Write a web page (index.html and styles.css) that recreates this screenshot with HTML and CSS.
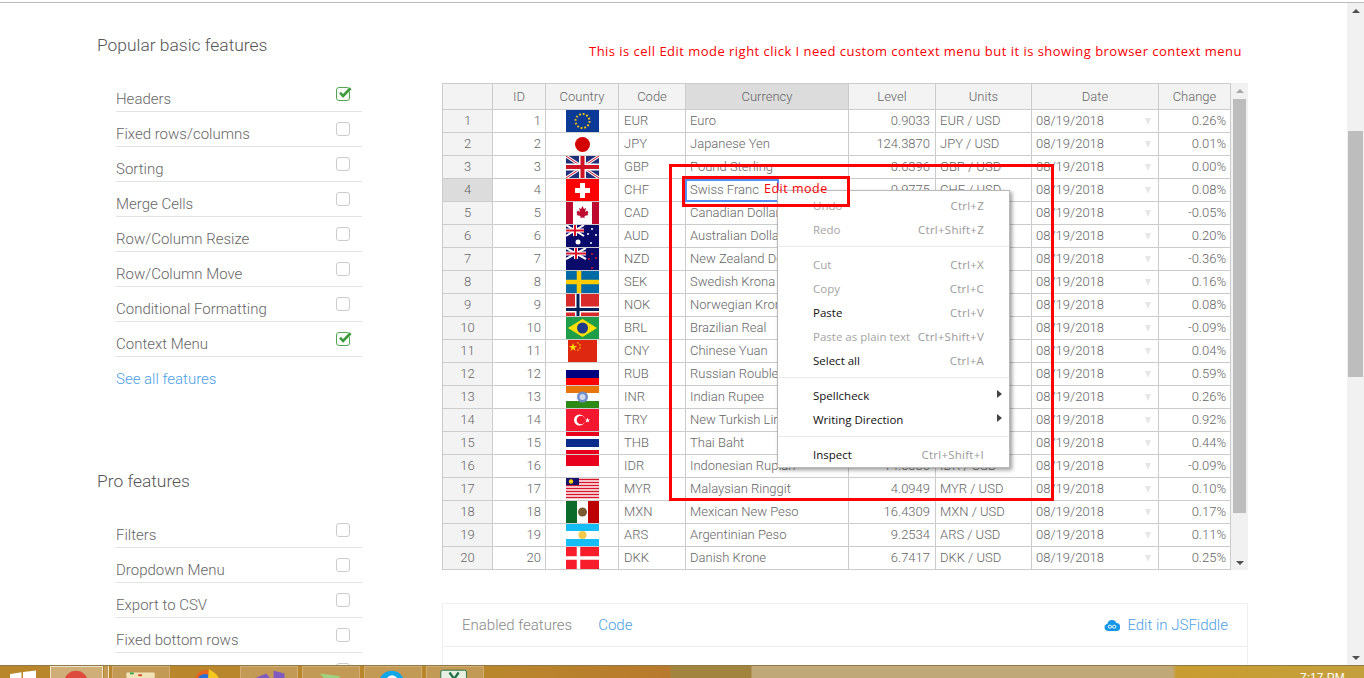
FILE: index.html
```html
<!DOCTYPE html>
<html lang="en">
<head>
<meta charset="utf-8">
<title>Handsontable features</title>
<link rel="stylesheet" href="styles.css">
</head>
<body>
<div class="screen">
  <div class="page">
    <div class="content">
      <aside class="sidebar">
        <h2 class="side-title">Popular basic features</h2>
        <ul class="features">
          <li>Headers<span class="box on"><svg viewBox="0 0 17 15"><path d="M6 11 2.8 7.6 5 5.6 7 7.7 13.5 1 15.8 3.2 7 12.2z"/></svg></span></li>
          <li>Fixed rows/columns<span class="box"></span></li>
          <li>Sorting<span class="box"></span></li>
          <li>Merge Cells<span class="box"></span></li>
          <li>Row/Column Resize<span class="box"></span></li>
          <li>Row/Column Move<span class="box"></span></li>
          <li>Conditional Formatting<span class="box"></span></li>
          <li>Context Menu<span class="box on"><svg viewBox="0 0 17 15"><path d="M6 11 2.8 7.6 5 5.6 7 7.7 13.5 1 15.8 3.2 7 12.2z"/></svg></span></li>
        </ul>
        <a class="see-all" href="#">See all features</a>
        <h2 class="side-title pro">Pro features</h2>
        <ul class="features">
          <li>Filters<span class="box"></span></li>
          <li>Dropdown Menu<span class="box"></span></li>
          <li>Export to CSV<span class="box"></span></li>
          <li>Fixed bottom rows<span class="box"></span></li>
          <li>Trimming rows<span class="box"></span></li>
        </ul>
      </aside>
      <main class="main">
        <p class="note">This is cell Edit mode right click I need custom context menu but it is showing browser context menu</p>
        <div class="grid-wrap">
          <table class="grid">
            <colgroup><col class="c1"><col class="c2"><col class="c3"><col class="c4"><col class="c5"><col class="c6"><col class="c7"><col class="c8"><col class="c9"></colgroup>
            <thead><tr><th></th><th>ID</th><th>Country</th><th>Code</th><th class="active">Currency</th><th>Level</th><th>Units</th><th>Date</th><th>Change</th></tr></thead>
            <tbody>
              <tr><th>1</th><td class="r">1</td><td><svg class="flag" viewBox="0 0 33 22"><rect width="33" height="22" fill="#0a3a96"/><circle cx="16.5" cy="11" r="7" fill="none" stroke="#f5c400" stroke-width="2" stroke-dasharray="1.8 1.87"/></svg></td><td>EUR</td><td>Euro</td><td class="r">0.9033</td><td>EUR / USD</td><td class="date">08/19/2018</td><td class="r">0.26%</td></tr>
              <tr><th>2</th><td class="r">2</td><td><svg class="flag" viewBox="0 0 33 22"><rect width="33" height="22" fill="#fff"/><circle cx="16.5" cy="11.5" r="7.5" fill="#d40000"/></svg></td><td>JPY</td><td>Japanese Yen</td><td class="r">124.3870</td><td>JPY / USD</td><td class="date">08/19/2018</td><td class="r">0.01%</td></tr>
              <tr><th>3</th><td class="r">3</td><td><svg class="flag" viewBox="0 0 33 22"><rect width="33" height="22" fill="#1f2f78"/><path d="M0 0 33 22M33 0 0 22" stroke="#fff" stroke-width="3"/><path d="M0 0 33 22M33 0 0 22" stroke="#cf1126" stroke-width="1"/><path d="M16.5 0V22M0 11H33" stroke="#fff" stroke-width="7"/><path d="M16.5 0V22M0 11H33" stroke="#cf1126" stroke-width="4"/></svg></td><td>GBP</td><td>Pound Sterling</td><td class="r">0.6396</td><td>GBP / USD</td><td class="date">08/19/2018</td><td class="r">0.00%</td></tr>
              <tr><th class="active">4</th><td class="r">4</td><td><svg class="flag" viewBox="0 0 33 22"><rect width="33" height="22" fill="#ff0000"/><path d="M14 4h5v5h5v5h-5v5h-5v-5H9V9h5z" fill="#fff"/></svg></td><td>CHF</td><td>Swiss Franc</td><td class="r">0.9775</td><td>CHF / USD</td><td class="date">08/19/2018</td><td class="r">0.08%</td></tr>
              <tr><th>5</th><td class="r">5</td><td><svg class="flag" viewBox="0 0 33 22"><rect width="33" height="22" fill="#fff"/><rect width="7" height="22" fill="#bf0a30"/><rect x="26" width="7" height="22" fill="#bf0a30"/><path d="M16.500 4l1.500 3 2-1-1 4 2-1.500 1.500 2-1 1.500 1 1-4 1 .2 2-2-.5h-.4l-2 .5.2-2-4-1 1-1-1-1.500 1.500-2 2 1.500-1-4 2 1z" fill="#bf0a30"/></svg></td><td>CAD</td><td>Canadian Dollar</td><td class="r">1.3010</td><td>CAD / USD</td><td class="date">08/19/2018</td><td class="r">-0.05%</td></tr>
              <tr><th>6</th><td class="r">6</td><td><svg class="flag" viewBox="0 0 33 22"><rect width="33" height="22" fill="#0a0a6b"/><path d="M0 0 18 11M18 0 0 11" stroke="#fff" stroke-width="2"/><path d="M9 0V11M0 5.500H18" stroke="#fff" stroke-width="4"/><path d="M9 0V11M0 5.500H18" stroke="#d8152b" stroke-width="2"/><circle cx="12" cy="17" r="2.500" fill="#fff"/><circle cx="26" cy="4" r="1" fill="#fff"/><circle cx="30" cy="10" r="1" fill="#fff"/><circle cx="25" cy="18" r="1" fill="#fff"/><circle cx="22" cy="9" r="1" fill="#fff"/></svg></td><td>AUD</td><td>Australian Dollar</td><td class="r">1.3702</td><td>AUD / USD</td><td class="date">08/19/2018</td><td class="r">0.20%</td></tr>
              <tr><th>7</th><td class="r">7</td><td><svg class="flag" viewBox="0 0 33 22"><rect width="33" height="22" fill="#0a0a6b"/><path d="M0 0 20 11M20 0 0 11" stroke="#fff" stroke-width="2"/><path d="M10 0V11M0 5.500H20" stroke="#fff" stroke-width="4"/><path d="M10 0V11M0 5.500H20" stroke="#d8152b" stroke-width="2"/><circle cx="26" cy="6" r="1" fill="#d8152b"/><circle cx="30" cy="10" r="1" fill="#d8152b"/><circle cx="26" cy="20" r="1" fill="#d8152b"/><circle cx="23" cy="11" r="1" fill="#d8152b"/></svg></td><td>NZD</td><td>New Zealand Dollar</td><td class="r">1.5117</td><td>NZD / USD</td><td class="date">08/19/2018</td><td class="r">-0.36%</td></tr>
              <tr><th>8</th><td class="r">8</td><td><svg class="flag" viewBox="0 0 33 22"><rect width="33" height="22" fill="#006aa7"/><path d="M0 11H33M13 0V22" stroke="#fecc00" stroke-width="4.500"/></svg></td><td>SEK</td><td>Swedish Krona</td><td class="r">9.1261</td><td>SEK / USD</td><td class="date">08/19/2018</td><td class="r">0.16%</td></tr>
              <tr><th>9</th><td class="r">9</td><td><svg class="flag" viewBox="0 0 33 22"><rect width="33" height="22" fill="#d92a2a"/><path d="M0 15.500H33M12 0V22" stroke="#fff" stroke-width="6"/><path d="M0 15.500H33M12 0V22" stroke="#00205b" stroke-width="3"/></svg></td><td>NOK</td><td>Norwegian Krone</td><td class="r">8.3585</td><td>NOK / USD</td><td class="date">08/19/2018</td><td class="r">0.08%</td></tr>
              <tr><th>10</th><td class="r">10</td><td><svg class="flag" viewBox="0 0 33 22"><rect width="33" height="22" fill="#1f9e4a"/><path d="M16.500 2 31 11 16.500 20 2 11z" fill="#fedf00"/><circle cx="16.500" cy="11" r="5.500" fill="#1f3a8a"/></svg></td><td>BRL</td><td>Brazilian Real</td><td class="r">3.9176</td><td>BRL / USD</td><td class="date">08/19/2018</td><td class="r">-0.09%</td></tr>
              <tr><th>11</th><td class="r">11</td><td><svg class="flag" viewBox="0 0 33 22"><rect x="2" width="29" height="22" fill="#de2910"/><path d="M7 3 8 6 11 6 8.500 8 9.500 11 7 9 4.500 11 5.500 8 3 6 6 6z" fill="#ffde00"/><circle cx="12" cy="3" r=".8" fill="#ffde00"/><circle cx="14" cy="5" r=".8" fill="#ffde00"/><circle cx="14" cy="8" r=".8" fill="#ffde00"/><circle cx="12" cy="10" r=".8" fill="#ffde00"/></svg></td><td>CNY</td><td>Chinese Yuan</td><td class="r">6.8540</td><td>CNY / USD</td><td class="date">08/19/2018</td><td class="r">0.04%</td></tr>
              <tr><th>12</th><td class="r">12</td><td><svg class="flag" viewBox="0 0 33 22"><rect width="33" height="7" fill="#fff"/><rect y="7" width="33" height="8" fill="#00007f"/><rect y="15" width="33" height="7" fill="#f00"/></svg></td><td>RUB</td><td>Russian Rouble</td><td class="r">66.9268</td><td>RUB / USD</td><td class="date">08/19/2018</td><td class="r">0.59%</td></tr>
              <tr><th>13</th><td class="r">13</td><td><svg class="flag" viewBox="0 0 33 22"><rect width="33" height="22" fill="#fff"/><rect width="33" height="7" fill="#e8760a"/><rect y="15" width="33" height="7" fill="#2d8a17"/><circle cx="16.500" cy="11" r="5.500" fill="#6f8cc8"/><circle cx="16.500" cy="11" r="3" fill="#cfd8ec"/></svg></td><td>INR</td><td>Indian Rupee</td><td class="r">69.8430</td><td>INR / USD</td><td class="date">08/19/2018</td><td class="r">0.26%</td></tr>
              <tr><th>14</th><td class="r">14</td><td><svg class="flag" viewBox="0 0 33 22"><rect width="33" height="22" fill="#f31830"/><circle cx="13.500" cy="11" r="5.500" fill="#fff"/><circle cx="15" cy="11" r="4.300" fill="#f31830"/><path d="M21.500 8.500 22.200 10.400 24.200 10.400 22.600 11.600 23.200 13.500 21.500 12.400 19.800 13.500 20.400 11.600 18.800 10.400 20.800 10.400z" fill="#fff"/></svg></td><td>TRY</td><td>New Turkish Lira</td><td class="r">6.0550</td><td>TRY / USD</td><td class="date">08/19/2018</td><td class="r">0.92%</td></tr>
              <tr><th>15</th><td class="r">15</td><td><svg class="flag" viewBox="0 0 33 22"><rect width="33" height="22" fill="#fff"/><rect width="33" height="4" fill="#e8001c"/><rect y="7" width="33" height="8" fill="#0a2d8c"/><rect y="18" width="33" height="4" fill="#e8001c"/></svg></td><td>THB</td><td>Thai Baht</td><td class="r">33.2040</td><td>THB / USD</td><td class="date">08/19/2018</td><td class="r">0.44%</td></tr>
              <tr><th>16</th><td class="r">16</td><td><svg class="flag" viewBox="0 0 33 22"><rect width="33" height="11" fill="#e8001c"/></svg></td><td>IDR</td><td>Indonesian Rupiah</td><td class="r">14.5330</td><td>IDR / USD</td><td class="date">08/19/2018</td><td class="r">-0.09%</td></tr>
              <tr><th>17</th><td class="r">17</td><td><svg class="flag" viewBox="0 0 33 22"><rect width="33" height="22" fill="#fff"/><path d="M0 1.500H33M0 4.500H33M0 7.500H33M0 10.500H33M0 13.500H33M0 16.500H33M0 19.500H33" stroke="#d8152b" stroke-width="1.500"/><rect width="13" height="7" fill="#14146e"/><circle cx="5" cy="3.500" r="2.200" fill="#ffcf00"/></svg></td><td>MYR</td><td>Malaysian Ringgit</td><td class="r">4.0949</td><td>MYR / USD</td><td class="date">08/19/2018</td><td class="r">0.10%</td></tr>
              <tr><th>18</th><td class="r">18</td><td><svg class="flag" viewBox="0 0 33 22"><rect width="33" height="22" fill="#fff"/><rect width="11" height="22" fill="#0b6b2b"/><rect x="22" width="11" height="22" fill="#bd0000"/><circle cx="16.500" cy="11" r="4.500" fill="#7a5a32"/></svg></td><td>MXN</td><td>Mexican New Peso</td><td class="r">16.4309</td><td>MXN / USD</td><td class="date">08/19/2018</td><td class="r">0.17%</td></tr>
              <tr><th>19</th><td class="r">19</td><td><svg class="flag" viewBox="0 0 33 22"><rect width="33" height="22" fill="#fff"/><rect width="33" height="7" fill="#14bdf6"/><rect y="15" width="33" height="7" fill="#14bdf6"/><circle cx="16.500" cy="11" r="4" fill="#f2c94c"/></svg></td><td>ARS</td><td>Argentinian Peso</td><td class="r">9.2534</td><td>ARS / USD</td><td class="date">08/19/2018</td><td class="r">0.11%</td></tr>
              <tr><th>20</th><td class="r">20</td><td><svg class="flag" viewBox="0 0 33 22"><rect width="33" height="22" fill="#f81d2b"/><path d="M0 11H33M12.500 0V22" stroke="#fff" stroke-width="3.500"/></svg></td><td>DKK</td><td>Danish Krone</td><td class="r">6.7417</td><td>DKK / USD</td><td class="date">08/19/2018</td><td class="r">0.25%</td></tr>
            </tbody>
          </table>
          <div class="grid-scroll">
            <span class="arrow up dim"></span>
            <span class="grid-thumb"></span>
            <span class="arrow down"></span>
          </div>
        </div>
        <section class="card">
          <div class="card-head">
            <span class="card-label">Enabled features</span>
            <a class="card-link" href="#">Code</a>
            <a class="card-fiddle" href="#"><svg viewBox="0 0 16 12"><path d="M4 12a3.700 3.700 0 0 1-.6-7.300A4.800 4.800 0 0 1 12.500 4 4 4 0 0 1 12 12z" fill="#1797e8"/><path d="M5.800 6.200a1.500 1.500 0 1 0 0 3c1.700 0 2.800-3 4.500-3a1.500 1.500 0 1 1 0 3c-1.700 0-2.800-3-4.500-3z" fill="none" stroke="#fff" stroke-width="1"/></svg>Edit in JSFiddle</a>
          </div>
        </section>
      </main>
    </div>
    <div class="page-scroll">
      <span class="arrow up"></span>
      <span class="page-thumb"></span>
      <span class="arrow down"></span>
    </div>
  </div>
  <footer class="taskbar">
    <svg class="win" viewBox="0 0 26 12"><path d="M0 8 11.500 6.300V12H0zM13 6 26 4.500V12H13z" fill="#fff"/></svg>
    <div class="task current"><svg viewBox="0 0 53 12"><circle cx="26" cy="17" r="13" fill="#dd4b3e"/></svg></div>
    <div class="task"><svg viewBox="0 0 58 12"><rect x="13" y="6" width="31" height="6" rx="1" fill="#f1e3b8"/><rect x="17" y="6" width="4" height="2" fill="#2ba84a"/><rect x="26" y="8" width="4" height="2" fill="#d8462c"/></svg></div>
    <div class="task bare"><svg viewBox="0 0 26 12"><circle cx="12" cy="15" r="11" fill="#e8641c"/><circle cx="11" cy="16" r="8" fill="#2b6fd6"/><path d="M15 3l7 5 3 4H14z" fill="#f6c81d"/></svg></div>
    <div class="task"><svg viewBox="0 0 58 12"><path d="M14 12 26 7 30 12zM34 4l12 3V12H34z" fill="#7f5ac0"/></svg></div>
    <div class="task"><svg viewBox="0 0 58 12"><path d="M17 7 40 10 37 12H21z" fill="#9fd27f"/></svg></div>
    <div class="task"><svg viewBox="0 0 58 12"><circle cx="27.500" cy="18" r="14" fill="#12a7e8"/><circle cx="28" cy="15" r="6" fill="#fff"/></svg></div>
    <div class="task"><svg viewBox="0 0 58 12"><rect x="13.500" y="3.500" width="28" height="10" rx="2" fill="#e8f0e4" stroke="#1e7145"/><path d="M23 6l5 7M33 6l-5 7" stroke="#1e7145" stroke-width="2.500"/></svg></div>
    <span class="clock">7:17 PM</span>
  </footer>

  <div class="editor">Swiss Franc</div>
  <div class="ctx">
    <div class="ctx-group">
      <div class="ctx-item off"><span>Undo</span><span class="key">Ctrl+Z</span></div>
      <div class="ctx-item off"><span>Redo</span><span class="key">Ctrl+Shift+Z</span></div>
    </div>
    <div class="ctx-group">
      <div class="ctx-item off"><span>Cut</span><span class="key">Ctrl+X</span></div>
      <div class="ctx-item off"><span>Copy</span><span class="key">Ctrl+C</span></div>
      <div class="ctx-item"><span>Paste</span><span class="key">Ctrl+V</span></div>
      <div class="ctx-item off"><span>Paste as plain text</span><span class="key">Ctrl+Shift+V</span></div>
      <div class="ctx-item"><span>Select all</span><span class="key">Ctrl+A</span></div>
    </div>
    <div class="ctx-group">
      <div class="ctx-item sub"><span>Spellcheck</span></div>
      <div class="ctx-item sub"><span>Writing Direction</span></div>
    </div>
    <div class="ctx-group">
      <div class="ctx-item"><span>Inspect</span><span class="key">Ctrl+Shift+I</span></div>
    </div>
  </div>
  <div class="mark mark-area"></div>
  <div class="mark mark-edit"><span>Edit mode</span></div>
</div>
</body>
</html>
```
FILE: styles.css
```css
* { box-sizing: border-box; }
html, body { margin: 0; padding: 0; overflow: hidden; }
body { background: #fff; font-family: Roboto, "Liberation Sans", sans-serif; font-weight: 300; color: #666; }
a { color: #4aa0e6; text-decoration: none; }

.screen { position: relative; width: 1364px; height: 678px; display: flex; flex-direction: column; overflow: hidden; }
.page { flex: 1; min-height: 0; display: flex; margin-top: 2px; border-top: 1px solid #bbb; }
.content { flex: 1; min-width: 0; display: grid; grid-template-columns: 442px 806px; align-items: start; overflow: hidden; }

.sidebar { padding: 31px 0 0 97px; }
.side-title { margin: 0; font-size: 17.4px; line-height: 22px; font-weight: 300; color: #555; }
.side-title.pro { margin-top: 80px; }
.features { list-style: none; margin: 21px 0 0 19px; padding: 0; width: 246px; }
.features li { position: relative; height: 35px; padding-top: 11px; font-size: 15px; line-height: 22px; border-bottom: 1px solid #e3e3e3; color: #666; white-space: nowrap; }
.box { position: absolute; left: 220px; top: 10px; width: 14px; height: 14px; border: 1px solid #ccc; border-radius: 3px; }
.box.on { border-color: #4fa84f; }
.box.on svg { position: absolute; left: -1px; top: -2px; width: 17px; height: 15px; fill: #3d9b3d; stroke: #fff; stroke-width: .5; }
.see-all { display: block; margin: 11px 0 0 19px; font-size: 15px; line-height: 22px; }

.main { padding-top: 39px; }
.note { margin: 0 0 0 147px; height: 41px; font-family: "Open Sans", sans-serif; font-weight: 400; font-size: 13px; line-height: 18px; color: #f00; white-space: nowrap; letter-spacing: .47px; }

.grid-wrap { display: flex; width: 806px; height: 487px; }
.grid { table-layout: fixed; width: 789px; height: 487px; border-collapse: separate; border-spacing: 0; border-top: 1px solid #ccc; border-left: 1px solid #ccc; font-size: 13px; }
.c1 { width: 50px; } .c2 { width: 53px; } .c3 { width: 73px; } .c4 { width: 67px; } .c5 { width: 163px; }
.c6 { width: 87px; } .c7 { width: 96px; } .c8 { width: 127px; } .c9 { width: 72px; }
.grid th, .grid td { height: 23px; padding: 0 4px; line-height: 22px; border-right: 1px solid #ccc; border-bottom: 1px solid #ccc; overflow: hidden; white-space: nowrap; font-weight: 300; color: #666; vertical-align: middle; }
.grid thead th { height: 26px; background: #f3f3f3; text-align: center; }
.grid tbody th { background: #f3f3f3; text-align: center; font-size: 13px; }
.grid th.active { background: #dcdcdc; }
.grid .r { text-align: right; }
.grid td:nth-child(3) { padding: 0; }
.grid td:nth-child(4) { padding-left: 5px; }
.grid td:nth-child(6) { padding-right: 5px; }
.flag { display: block; width: 33px; height: 22px; margin: 0 auto; }
.date { position: relative; }
.date::after { content: ""; position: absolute; right: 7px; top: 8px; border-top: 7px solid #e6e6e6; border-left: 3.5px solid transparent; border-right: 3.5px solid transparent; }

.grid-scroll { width: 17px; background: #f1f1f1; display: flex; flex-direction: column; align-items: center; }
.grid-thumb { width: 13px; height: 414px; margin-top: 6px; background: #bdbdbd; }
.arrow { display: block; width: 0; height: 0; border-left: 4px solid transparent; border-right: 4px solid transparent; }
.arrow.up { border-bottom: 4px solid #505050; margin-top: 6px; }
.arrow.up.dim { border-bottom-color: #a8a8a8; }
.arrow.down { border-top: 4px solid #505050; margin-top: auto; margin-bottom: 5px; }

.card { width: 806px; height: 110px; margin-top: 33px; border: 1px solid #eee; }
.card-head { height: 43px; display: flex; align-items: center; padding: 0 19px; border-bottom: 1px solid #eee; font-size: 15px; line-height: 22px; }
.card-label { color: #888; }
.card-link { margin-left: 26px; }
.card-fiddle { margin-left: auto; display: flex; align-items: center; gap: 7px; }
.card-fiddle svg { width: 16px; height: 12px; }

.page-scroll { width: 17px; background: #f1f1f1; display: flex; flex-direction: column; align-items: center; }
.page-thumb { width: 15px; height: 246px; margin-top: 118px; background: #bdbdbd; }

.taskbar { flex: none; height: 13px; display: flex; align-items: stretch; position: relative; border-top: 1px solid #8f7a45;
  background: linear-gradient(90deg, #ba862c 0, #ba862c 500px, #b8792c 670px, #a3843f 671px, #a3843f 751px, #c0a878 752px, #c0a878 1173px, #c99c30 1176px, #c4a03c 100%); }
.win { width: 26px; height: 12px; margin: 0 14px 0 10px; }
.task { width: 58px; margin-right: 4px; background: #c39a55; border: 1px solid #d2ae74; border-bottom: 0; }
.task.current { width: 53px; margin-right: 9px; background: #cfae78; border-color: #efe4c8; box-shadow: 1px 0 0 #ba862c, 5px 0 0 #c39a55, 6px 0 0 #efe4c8; }
.task.bare { width: 26px; margin: 0 20px 0 20px; background: none; border: 0; }
.task svg { display: block; width: 100%; height: 100%; }
.clock { position: absolute; left: 1300px; top: 5px; font-family: "Liberation Sans", sans-serif; font-weight: 400; font-size: 12px; line-height: 14px; color: #fff; white-space: nowrap; }

.editor { position: absolute; left: 685px; top: 179px; width: 94px; height: 23px; padding-left: 3px; border: 2px solid #5292f7; background: #fff; font-size: 13px; line-height: 18px; color: #666; white-space: nowrap; overflow: hidden; }

.ctx { position: absolute; left: 777px; top: 190px; width: 233px; height: 278px; padding-top: 2px; background: #fff; border: 1px solid #bababa; box-shadow: 2px 2px 4px rgba(0,0,0,.4); font-family: "Open Sans", sans-serif; font-size: 11.5px; font-weight: 400; color: #111; }
.ctx-group { padding: 0 0 5px; margin-bottom: 5px; border-bottom: 1px solid #e9e9e9; }
.ctx-group:last-child { border-bottom: 0; margin-bottom: 0; }
.ctx-item { position: relative; height: 24px; display: flex; justify-content: space-between; align-items: center; padding: 0 25px 0 35px; white-space: nowrap; }
.ctx-item.off { color: #a5a5a5; }
.key { color: #9a9a9a; letter-spacing: .25px; }
.sub::after { content: ""; position: absolute; right: 7px; top: 7px; border-left: 5px solid #444; border-top: 4px solid transparent; border-bottom: 4px solid transparent; }

.mark { position: absolute; border: 3px solid #f00; pointer-events: none; }
.mark-area { left: 669px; top: 164px; width: 385px; height: 337px; }
.mark-edit { left: 682px; top: 176px; width: 168px; height: 31px; }
.mark-edit span { position: absolute; left: 79px; top: 1px; font-family: "Open Sans", sans-serif; font-weight: 400; font-size: 12.5px; line-height: 18px; letter-spacing: .5px; color: #f00; white-space: nowrap; }
```
